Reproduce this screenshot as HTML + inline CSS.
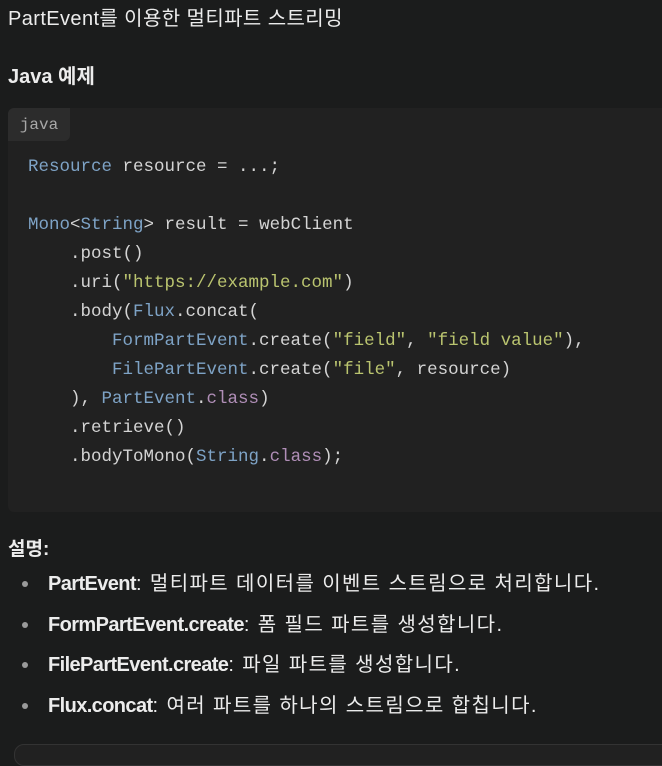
<!DOCTYPE html>
<html><head><meta charset="utf-8"><style>
body{margin:0;background:#1b1c1c;color:#ececec;font-family:"Liberation Sans","Noto Sans CJK KR",sans-serif;width:662px;height:750px;overflow:hidden;position:relative}
.t{position:absolute;left:8px;white-space:nowrap}
.code{position:absolute;left:8px;top:108px;width:660px;height:404px;background:#212121;border-radius:6px}
.lab{position:absolute;left:0;top:0;width:62px;height:33px;background:#2c2c2c;border-radius:6px 0 6px 0;color:#a8a8a8;font:16px "Liberation Mono",monospace;line-height:35px;text-align:center}
pre{position:absolute;left:20px;top:45px;margin:0;font:17.5px/29px "Liberation Mono",monospace;color:#d4d4d4}
.ty{color:#7ea3c6}.s{color:#bac46f}.k{color:#b08eb7}
ul{position:absolute;left:0;top:564px;margin:0;padding:0;list-style:none;font-size:20px;letter-spacing:1.4px}
li{position:relative;padding-left:48px;height:40.5px;line-height:40px;white-space:nowrap}
li:before{content:"";position:absolute;left:22px;top:17px;width:6px;height:6px;border-radius:50%;background:#9a9a9a}
b{letter-spacing:-0.6px}
.bot{position:absolute;left:14px;top:744px;width:660px;height:20px;border:1px solid #333;border-radius:10px;background:#212121}
</style></head><body>
<div class="t" style="top:2px;font-size:20px;letter-spacing:0.4px">PartEvent를 이용한 멀티파트 스트리밍</div>
<div class="t" style="top:60px;font-size:20px;font-weight:bold">Java 예제</div>
<div class="code"><div class="lab">java</div>
<pre><span class="ty">Resource</span> resource = ...;

<span class="ty">Mono</span>&lt;<span class="ty">String</span>&gt; result = webClient
    .post()
    .uri(<span class="s">"https://example.com"</span>)
    .body(<span class="ty">Flux</span>.concat(
        <span class="ty">FormPartEvent</span>.create(<span class="s">"field"</span>, <span class="s">"field value"</span>),
        <span class="ty">FilePartEvent</span>.create(<span class="s">"file"</span>, resource)
    ), <span class="ty">PartEvent</span>.<span class="k">class</span>)
    .retrieve()
    .bodyToMono(<span class="ty">String</span>.<span class="k">class</span>);</pre></div>
<div class="t" style="top:534px;font-size:19px;font-weight:bold">설명:</div>
<ul>
<li><b>PartEvent</b>: 멀티파트 데이터를 이벤트 스트림으로 처리합니다.</li>
<li><b>FormPartEvent.create</b>: 폼 필드 파트를 생성합니다.</li>
<li><b>FilePartEvent.create</b>: 파일 파트를 생성합니다.</li>
<li><b>Flux.concat</b>: 여러 파트를 하나의 스트림으로 합칩니다.</li>
</ul>
<div class="bot"></div>
</body></html>
